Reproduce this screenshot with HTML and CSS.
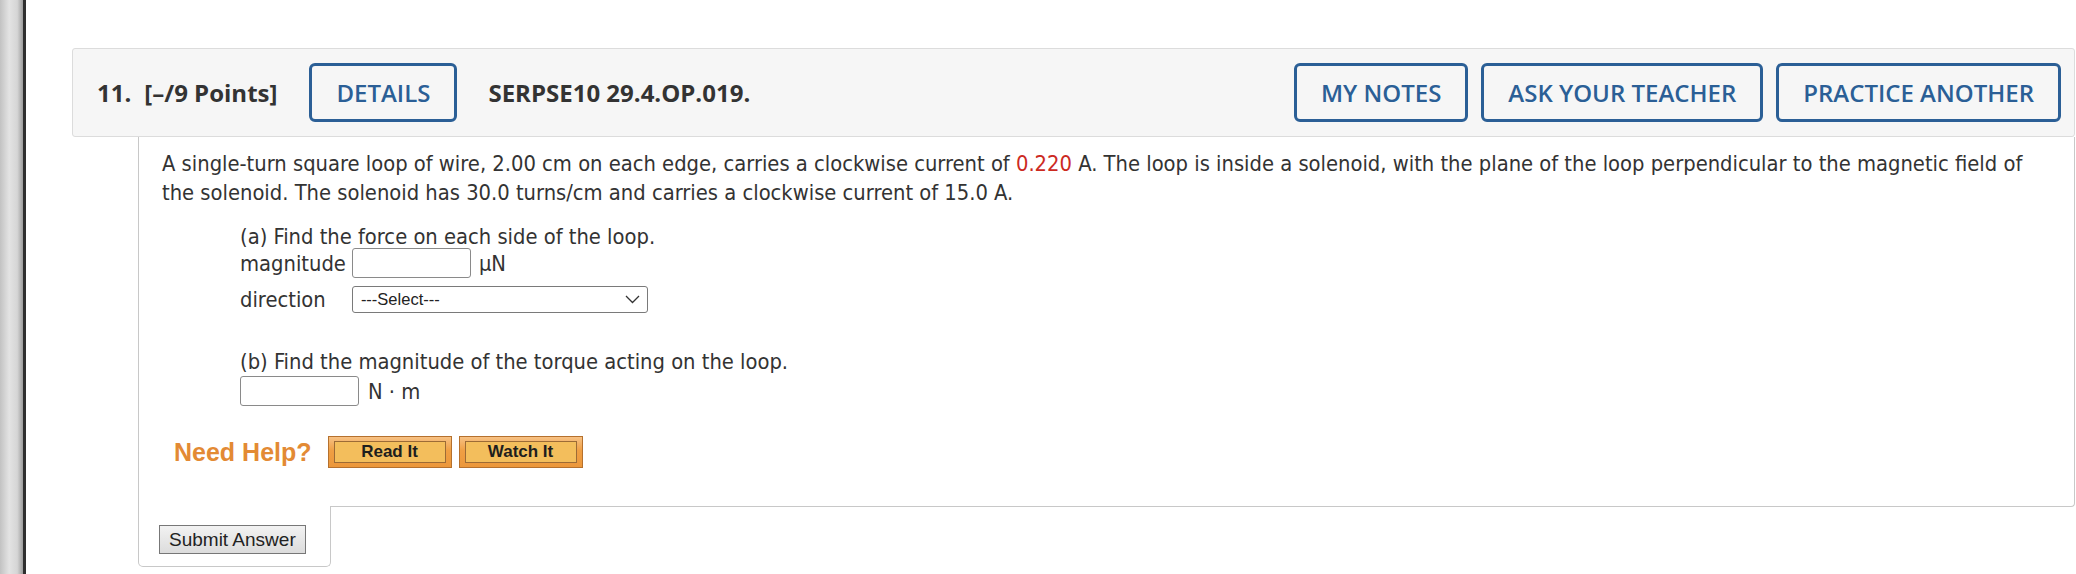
FILE: index.html
```html
<!DOCTYPE html>
<html lang="en">
<head>
<meta charset="utf-8">
<title>Question 11</title>
<link rel="stylesheet" href="styles.css">
</head>
<body>
<div class="page">
  <div class="edge"></div>
  <div class="main">
    <section class="question">
      <header class="qhead">
        <span class="qnum">11.</span>
        <span class="qpts">[–/9 Points]</span>
        <button class="hbtn" type="button">DETAILS</button>
        <span class="qid">SERPSE10 29.4.OP.019.</span>
        <div class="hactions">
          <button class="hbtn" type="button">MY NOTES</button>
          <button class="hbtn" type="button">ASK YOUR TEACHER</button>
          <button class="hbtn" type="button">PRACTICE ANOTHER</button>
        </div>
      </header>
      <div class="qbody">
        <div class="content">
          <p class="stem">A single-turn square loop of wire, 2.00 cm on each edge, carries a clockwise current of <span class="red">0.220</span> A. The loop is inside a solenoid, with the plane of the loop perpendicular to the magnetic field of the solenoid. The solenoid has 30.0 turns/cm and carries a clockwise current of 15.0 A.</p>
          <div class="part part-a">
            <div class="ptitle">(a) Find the force on each side of the loop.</div>
            <div class="rows">
              <span class="lbl">magnitude</span>
              <span class="cell"><input class="ans" type="text"><span class="unit">µN</span></span>
              <span class="lbl">direction</span>
              <span class="cell">
                <span class="select"><span>---Select---</span>
                  <svg width="15" height="9" viewBox="0 0 15 9"><polyline points="1,1 7.5,7.5 14,1" fill="none" stroke="#333" stroke-width="1.3"/></svg>
                </span>
              </span>
            </div>
          </div>
          <div class="part part-b">
            <div class="ptitle">(b) Find the magnitude of the torque acting on the loop.</div>
            <div class="arow"><input class="ans" type="text"><span class="unit">N · m</span></div>
          </div>
          <div class="help">
            <span class="needhelp">Need Help?</span>
            <button class="hlp" type="button"><span class="inner">Read It</span></button>
            <button class="hlp" type="button"><span class="inner">Watch It</span></button>
          </div>
        </div>
        <div class="tab">
          <button class="submit" type="button">Submit Answer</button>
        </div>
      </div>
    </section>
  </div>
</div>
</body>
</html>
```

FILE: styles.css
```css
html, body {
  margin: 0;
  padding: 0;
  background: #fff;
}

.page {
  display: flex;
  min-height: 574px;
}

.edge {
  flex: none;
  width: 23px;
  background: linear-gradient(to right, #c2c2c2 0%, #e3e3e3 40%, #d5d5d5 75%, #9c9c9c 100%);
  border-right: 3px solid #2f2f2f;
}

.main {
  flex: 1;
  padding: 48px 1px 0 46px;
}

.qhead {
  display: flex;
  align-items: center;
  height: 89px;
  box-sizing: border-box;
  border: 1px solid #dcdcdc;
  border-radius: 3px;
  background: #f6f6f6;
  padding: 0 13px 0 24px;
  font-family: "Open Sans", sans-serif;
  font-size: 24px;
  font-weight: 700;
  color: #333;
}

.qnum { margin-right: 13px; }
.qpts { margin-right: 32px; }
.qid { margin-left: 31px; }

.hactions {
  margin-left: auto;
  display: flex;
  gap: 13px;
}

.hbtn {
  height: 59px;
  box-sizing: border-box;
  padding: 0 24px;
  border: 3px solid #2b5f96;
  border-radius: 6px;
  background: transparent;
  color: #2b5f96;
  font-family: "Open Sans", sans-serif;
  font-size: 24px;
  font-weight: 600;
  line-height: 1;
}

.qbody {
  margin-left: 66px;
}

.content {
  border: 1px solid #c8c8c8;
  border-top: none;
  border-radius: 0 0 4px 0;
  padding: 12px 34px 38px 23px;
  font-family: "DejaVu Sans Condensed", "DejaVu Sans", Verdana, sans-serif;
  font-stretch: condensed;
  font-size: 21.75px;
  color: #333;
}

.stem {
  margin: 0;
  line-height: 29px;
}

.red { color: #cc2a1f; }

.part {
  margin-left: 78px;
}

.part-a { margin-top: 18px; }
.part-b { margin-top: 37px; }

.ptitle {
  line-height: 23px;
}

.rows {
  display: grid;
  grid-template-columns: max-content max-content;
  column-gap: 6px;
  row-gap: 8px;
  align-items: center;
}

.cell {
  display: flex;
  align-items: center;
}

.ans {
  width: 119px;
  height: 30px;
  box-sizing: border-box;
  border: 1px solid #8a8a8a;
  border-radius: 3px;
  background: #fff;
  margin: 0;
  padding: 0 4px;
}

.unit {
  margin-left: 8px;
}

.select {
  display: flex;
  align-items: center;
  justify-content: space-between;
  width: 296px;
  height: 27px;
  box-sizing: border-box;
  border: 1px solid #7a7a7a;
  border-radius: 3px;
  padding: 0 7px 0 8px;
  background: #fff;
  font-family: "Liberation Sans", Arial, sans-serif;
  font-stretch: normal;
  font-size: 16.5px;
  color: #222;
}

.arow {
  display: flex;
  align-items: center;
  margin-top: 3px;
}

.arow .unit { margin-left: 9px; }

.help {
  display: flex;
  align-items: center;
  margin-top: 30px;
  margin-left: 12px;
}

.needhelp {
  font-family: "Liberation Sans", Arial, sans-serif;
  font-stretch: normal;
  font-weight: 700;
  font-size: 25px;
  color: #e38a34;
  margin-right: 16px;
}

.hlp {
  width: 124px;
  height: 32px;
  box-sizing: border-box;
  margin: 0 7px 0 0;
  padding: 4px 5px;
  border: 1px solid #b5712e;
  background: linear-gradient(to bottom, #f7c184 0%, #ef9f44 45%, #ec973b 100%);
  cursor: pointer;
}

.hlp .inner {
  display: flex;
  align-items: center;
  justify-content: center;
  height: 100%;
  box-sizing: border-box;
  border: 1px solid #9c6b36;
  background: #f3be5c;
  font-family: "Liberation Sans", Arial, sans-serif;
  font-weight: 700;
  font-size: 17px;
  color: #1e1e1e;
}

.tab {
  width: 193px;
  box-sizing: border-box;
  margin-top: -1px;
  border: 1px solid #c8c8c8;
  border-top: none;
  border-radius: 0 0 5px 5px;
  background: #fff;
  padding: 19px 0 12px 20px;
}

.submit {
  display: block;
  height: 29px;
  box-sizing: border-box;
  padding: 0 9px;
  border: 1px solid #777;
  background: linear-gradient(to bottom, #f2f2f2, #dcdcdc);
  font-family: "Liberation Sans", Arial, sans-serif;
  font-size: 19px;
  color: #222;
  margin: 0;
}
```
